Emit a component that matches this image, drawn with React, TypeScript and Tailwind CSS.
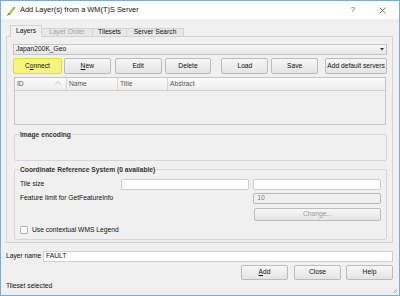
import React from "react";

const Btn = ({ children, className = "", disabled = false }: { children: React.ReactNode; className?: string; disabled?: boolean }) => (
  <div
    className={`flex items-center justify-center border border-[#bcbcbc] rounded-[2px] bg-gradient-to-b from-[#f7f7f7] to-[#e4e4e4] ${disabled ? "text-[#9a9a9a]" : "text-[#111]"} ${className}`}
  >
    {children}
  </div>
);

export default function App() {
  return (
    <div
      className="w-[400px] h-[296px] border border-[#74acde] bg-[#f0f0f0] flex flex-col text-[6.7px] leading-none text-[#111] relative overflow-hidden"
      style={{ fontFamily: '"Liberation Sans", Arial, sans-serif' }}
    >
      {/* Title bar */}
      <div className="h-[18px] bg-white flex items-center shrink-0">
        <svg width="9" height="11" viewBox="0 0 9 11" className="ml-[6px] mr-[4px]">
          <path d="M1 10 L7 1.5 L8.5 2.5 L2.5 10.5 Z" fill="#7fb93a" />
          <path d="M1 10 L3 5 L5 5.5 Z" fill="#e9d84a" />
          <path d="M0.5 10.5 L2 8" stroke="#3a7a1e" strokeWidth="1" />
        </svg>
        <span className="text-[7.4px] text-[#111]">Add Layer(s) from a WM(T)S Server</span>
        <span className="ml-auto text-[8px] text-[#555] mr-[24px]">?</span>
        <svg width="7" height="7" viewBox="0 0 7 7" className="mr-[13px]">
          <path d="M0.5 0.5 L6.5 6.5 M6.5 0.5 L0.5 6.5" stroke="#555" strokeWidth="0.8" />
        </svg>
      </div>

      {/* Tabs */}
      <div className="pl-[5px] pr-[6px] pt-[6px] flex flex-col">
        <div className="flex items-end h-[11px] pl-[4px] relative z-10">
          <div className="h-[12px] px-[4px] w-[32px] flex items-center justify-center border border-[#d3d3d3] border-b-0 bg-[#f0f0f0] mb-[-1px]">
            Layers
          </div>
          <div className="h-[8px] w-[51px] flex items-center justify-center border border-[#d3d3d3] border-b-0 border-l-0 bg-[#e8e8e8] text-[#a0a0a0]">
            Layer Order
          </div>
          <div className="h-[8px] w-[34px] flex items-center justify-center border border-[#d3d3d3] border-b-0 border-l-0 bg-[#e8e8e8]">
            Tilesets
          </div>
          <div className="h-[8px] w-[57px] flex items-center justify-center border border-[#d3d3d3] border-b-0 border-l-0 bg-[#e8e8e8]">
            Server Search
          </div>
        </div>

        {/* Tab panel */}
        <div className="h-[207px] border border-[#d3d3d3] pl-[6px] pr-[5px] pt-[7px] flex flex-col">
          {/* Combo */}
          <div className="h-[11px] border border-[#c4c4c4] bg-gradient-to-b from-[#f6f6f6] to-[#e6e6e6] flex items-center pl-[2px]">
            <span>Japan200K_Geo</span>
            <svg width="4" height="3" viewBox="0 0 4 3" className="ml-auto mr-[2px]">
              <path d="M0 0 L4 0 L2 2.5 Z" fill="#333" />
            </svg>
          </div>

          {/* Buttons */}
          <div className="flex mt-[3px] h-[16px]">
            <div className="w-[49px] flex items-center justify-center border border-[#dede40] rounded-[2px] bg-[#f5f580]">
              C<span className="underline">o</span>nnect
            </div>
            <Btn className="w-[47px] ml-[2px]">
              <span className="underline">N</span>ew
            </Btn>
            <Btn className="w-[47px] ml-[4px]">Edit</Btn>
            <Btn className="w-[47px] ml-[3px]">Delete</Btn>
            <Btn className="w-[47px] ml-[10px]">Load</Btn>
            <Btn className="w-[47px] ml-[3px]">Save</Btn>
            <Btn className="w-[62px] ml-[7px]">Add default servers</Btn>
          </div>

          {/* Table */}
          <div className="h-[48px] mt-[3px] ml-[1px] mr-[1px] border border-[#c6c6c6] bg-[#f0f0f0] flex flex-col">
            <div className="h-[13px] flex bg-gradient-to-b from-[#fbfbfb] to-[#ededed] border-b border-[#cfcfcf] text-[#555]">
              <div className="w-[52px] border-r border-[#d6d6d6] flex items-center pl-[2px] relative">
                ID
                <svg width="6" height="4" viewBox="0 0 6 4" className="absolute left-[40px] top-[3px]">
                  <path d="M0.5 3.5 L3 0.5 L5.5 3.5" fill="none" stroke="#b0b0b0" strokeWidth="0.7" />
                </svg>
              </div>
              <div className="w-[51px] border-r border-[#d6d6d6] flex items-center pl-[2px]">Name</div>
              <div className="w-[50px] border-r border-[#d6d6d6] flex items-center pl-[2px]">Title</div>
              <div className="flex-1 flex items-center pl-[2px]">Abstract</div>
            </div>
          </div>

          {/* Image encoding */}
          <div className="h-[27px] mt-[9px] ml-[1px] border border-[#d6d6d6] rounded-[2px] relative">
            <span className="absolute left-[4px] top-[-3px] px-[1px] bg-[#f0f0f0] font-bold text-[#333]">Image encoding</span>
          </div>

          {/* CRS */}
          <div className="h-[71px] mt-[8px] ml-[1px] border border-[#d6d6d6] rounded-[2px] relative flex flex-col pl-[5px] pr-[5px] pt-[9px]">
            <span className="absolute left-[4px] top-[-3px] px-[1px] bg-[#f0f0f0] font-bold text-[#333]">
              Coordinate Reference System (0 available)
            </span>
            <div className="flex items-center h-[11px]">
              <span className="w-[101px]">Tile size</span>
              <div className="w-[129px] h-[11px] bg-white border border-[#cfcfcf] rounded-[2px]" />
              <div className="w-[128px] h-[11px] ml-[4px] bg-white border border-[#cfcfcf] rounded-[2px]" />
            </div>
            <div className="flex items-center h-[11px] mt-[3px]">
              <span className="w-[234px]">Feature limit for GetFeatureInfo</span>
              <div className="w-[128px] h-[11px] bg-[#f0f0f0] border border-[#b8b8b8] rounded-[2px] flex items-center pl-[3px] text-[#777]">
                10
              </div>
            </div>
            <div className="flex h-[13px] mt-[4px]">
              <Btn className="w-[128px] ml-[234px]" disabled>
                Change...
              </Btn>
            </div>
            <div className="flex items-center mt-[5px]">
              <div className="w-[8px] h-[8px] bg-white border border-[#b5b5b5] rounded-[1px]" />
              <span className="ml-[4px]">Use contextual WMS Legend</span>
            </div>
          </div>
        </div>
      </div>

      {/* Layer name */}
      <div className="flex items-center mt-[8px] pl-[5px] pr-[6px] h-[11px]">
        <span className="w-[37px]">Layer name</span>
        <div className="flex-1 h-[11px] bg-white border border-[#cfcfcf] flex items-center pl-[2px]">FAULT</div>
      </div>

      {/* Bottom buttons */}
      <div className="flex justify-end pr-[6px] mt-[3px] h-[15px]">
        <Btn className="w-[47px]">
          <span className="underline">A</span>dd
        </Btn>
        <Btn className="w-[47px] ml-[6px]">Close</Btn>
        <Btn className="w-[47px] ml-[5px]">Help</Btn>
      </div>

      <div className="pl-[5px] mt-[1px] h-[10px] flex items-center">Tileset selected</div>

      <svg width="6" height="6" viewBox="0 0 6 6" className="absolute right-[1px] bottom-[1px]">
        <path d="M5 1 L1 5 M5 3 L3 5 M5 5 L5 5" stroke="#a0a0a0" strokeWidth="0.7" />
      </svg>
    </div>
  );
}
